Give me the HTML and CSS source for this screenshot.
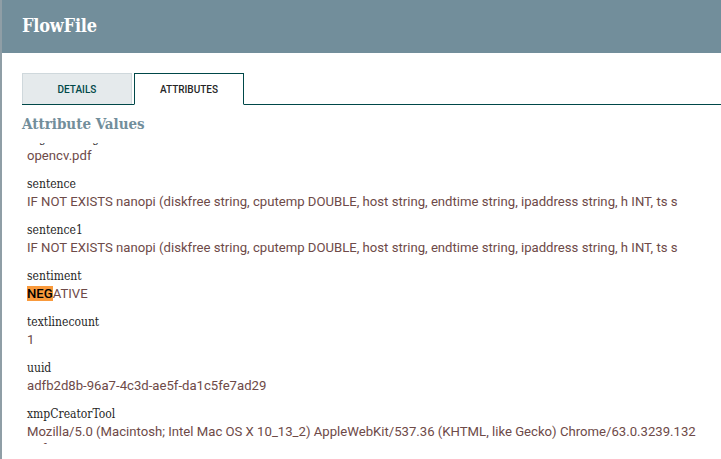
FILE: index.html
```html
<!DOCTYPE html>
<html lang="en">
<head>
<meta charset="utf-8">
<title>FlowFile</title>
<link rel="stylesheet" href="styles.css">
</head>
<body>
<div class="dialog">
  <div class="dialog-header">
    <h1 class="dialog-title">FlowFile</h1>
  </div>
  <div class="tabs">
    <div class="tab">DETAILS</div>
    <div class="tab tab-active">ATTRIBUTES</div>
  </div>
  <h2 class="section-title">Attribute Values</h2>
  <div class="attr-scroll">
    <div class="attr-list">
      <div class="attr">
        <div class="attr-name">segment.original.filename</div>
        <div class="attr-value">opencv.pdf</div>
      </div>
      <div class="attr">
        <div class="attr-name">sentence</div>
        <div class="attr-value">IF NOT EXISTS nanopi (diskfree string, cputemp DOUBLE, host string, endtime string, ipaddress string, h INT, ts s</div>
      </div>
      <div class="attr">
        <div class="attr-name">sentence1</div>
        <div class="attr-value">IF NOT EXISTS nanopi (diskfree string, cputemp DOUBLE, host string, endtime string, ipaddress string, h INT, ts s</div>
      </div>
      <div class="attr">
        <div class="attr-name">sentiment</div>
        <div class="attr-value"><span class="hl">NEG</span>ATIVE</div>
      </div>
      <div class="attr">
        <div class="attr-name">textlinecount</div>
        <div class="attr-value">1</div>
      </div>
      <div class="attr">
        <div class="attr-name">uuid</div>
        <div class="attr-value">adfb2d8b-96a7-4c3d-ae5f-da1c5fe7ad29</div>
      </div>
      <div class="attr">
        <div class="attr-name">xmpCreatorTool</div>
        <div class="attr-value">Mozilla/5.0 (Macintosh; Intel Mac OS X 10_13_2) AppleWebKit/537.36 (KHTML, like Gecko) Chrome/63.0.3239.132 Safari/537.36</div>
      </div>
    </div>
  </div>
</div>
</body>
</html>
```
FILE: styles.css
```css
html, body {
  margin: 0;
  padding: 0;
  height: 100%;
}
body {
  background: #8f9ea6;
  overflow: hidden;
}
.dialog {
  margin-left: 2px;
  height: 100%;
  background: #ffffff;
  display: flex;
  flex-direction: column;
}
.dialog-header {
  height: 53px;
  flex-shrink: 0;
  background: #728e9b;
  padding-left: 20px;
  box-sizing: border-box;
  display: flex;
  align-items: center;
}
.dialog-title {
  margin: 0 0 2px 0;
  font-family: "DejaVu Serif Condensed", "DejaVu Serif", serif;
  font-stretch: condensed;
  font-weight: bold;
  font-size: 18px;
  color: #ffffff;
  letter-spacing: -0.2px;
}
.tabs {
  flex-shrink: 0;
  margin-top: 20px;
  margin-left: 20px;
  display: flex;
  gap: 2px;
  border-bottom: 1px solid #004849;
  height: 31px;
}
.tab {
  width: 110px;
  box-sizing: border-box;
  height: 31px;
  border: 1px solid #cfd8dc;
  border-bottom: none;
  background: #e5eaec;
  color: #004849;
  font-family: Roboto, "Liberation Sans", sans-serif;
  font-weight: 500;
  font-size: 10px;
  display: flex;
  align-items: center;
  justify-content: center;
}
.tab-active {
  height: 32px;
  background: #ffffff;
  color: #262626;
  border: 1px solid #004849;
  border-bottom: 1px solid #ffffff;
  margin-bottom: -1px;
}
.section-title {
  flex-shrink: 0;
  margin: 10px 0 0 20px;
  font-family: "DejaVu Serif Condensed", "DejaVu Serif", serif;
  font-stretch: condensed;
  font-weight: bold;
  font-size: 15px;
  line-height: 18px;
  color: #728e9b;
}
.attr-scroll {
  flex-shrink: 0;
  margin: 10px 20px 0 20px;
  height: 301px;
  overflow: hidden;
}
.attr-list {
  margin-top: -13px;
  padding-left: 5px;
}
.attr {
  margin-bottom: 12px;
}
.attr-name {
  font-family: "DejaVu Serif Condensed", "DejaVu Serif", serif;
  font-stretch: condensed;
  font-size: 12px;
  line-height: 17px;
  color: #262626;
}
.attr-value {
  font-family: Roboto, "Liberation Sans", sans-serif;
  font-size: 13.15px;
  line-height: 17px;
  color: #6e4a48;
}
.hl {
  background: #f99a3c;
  color: #000000;
  font-weight: 500;
}
```
